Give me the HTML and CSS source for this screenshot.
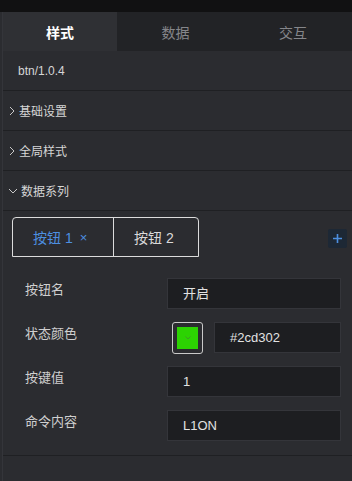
FILE: index.html
```html
<!DOCTYPE html>
<html lang="zh">

<head>
  <meta charset="UTF-8">
  <meta name="viewport" content="width=device-width, initial-scale=1.0">
  <title>属性面板</title>
  <link rel="stylesheet" href="styles.css">
</head>

<body>
  <div class="topbar"></div>
  <div class="panel">
    <div class="tabs">
      <div class="tab active">样式</div>
      <div class="tab">数据</div>
      <div class="tab">交互</div>
    </div>

    <div class="meta">btn/1.0.4</div>

    <div class="section">
      <svg class="arrow" width="8" height="10" viewBox="0 0 8 10"><path d="M2 1l4 4-4 4" fill="none" stroke="#c8c8c8" stroke-width="1"/></svg>
      <span>基础设置</span>
    </div>
    <div class="section">
      <svg class="arrow" width="8" height="10" viewBox="0 0 8 10"><path d="M2 1l4 4-4 4" fill="none" stroke="#c8c8c8" stroke-width="1"/></svg>
      <span>全局样式</span>
    </div>
    <div class="section">
      <svg class="arrow" width="10" height="8" viewBox="0 0 10 8"><path d="M1 2l4 4 4-4" fill="none" stroke="#c8c8c8" stroke-width="1"/></svg>
      <span>数据系列</span>
    </div>

    <div class="series">
      <div class="series-tabs">
        <div class="btn-tabs">
          <div class="btn-tab current">按钮 1 <span class="close">×</span></div>
          <div class="btn-tab second">按钮 2</div>
        </div>
        <div class="add">
          <svg width="11" height="11" viewBox="0 0 11 11"><path d="M5.5 1v9M1 5.5h9" stroke="#4d8fe0" stroke-width="1.6"/></svg>
        </div>
      </div>

      <div class="form">
        <div class="row">
          <div class="label">按钮名</div>
          <div class="input">开启</div>
        </div>
        <div class="row">
          <div class="label">状态颜色</div>
          <div class="color">
            <div class="swatch">
              <div class="fill">
                <svg width="8" height="6" viewBox="0 0 8 6"><path d="M1.5 1.5l2.5 2.5 2.5-2.5" fill="none" stroke="#3f9a25" stroke-width="1"/></svg>
              </div>
            </div>
            <div class="input hex">#2cd302</div>
          </div>
        </div>
        <div class="row">
          <div class="label">按键值</div>
          <div class="input">1</div>
        </div>
        <div class="row">
          <div class="label">命令内容</div>
          <div class="input">L1ON</div>
        </div>
      </div>
    </div>
  </div>
</body>

</html>
```

FILE: styles.css
```css
body {
  margin: 0;
  background-color: #2b2c30;
  font-family: "Liberation Sans", "Noto Sans CJK SC", sans-serif;
  font-size: 13px;
  color: #d0d0d0;
}

.topbar {
  height: 12px;
  background-color: #111112;
}

.panel {
  margin-left: 2px;
  border-left: 1px solid #34353a;
  background-color: #2b2c30;
  min-height: 469px;
}

.tabs {
  display: grid;
  grid-template-columns: 114px 117px 1fr;
  height: 39px;
  background-color: #222326;
}

.tab {
  display: flex;
  align-items: center;
  justify-content: center;
  font-size: 14px;
  color: #85868a;
}

.tab.active {
  background-color: #2f3034;
  color: #fff;
  font-weight: bold;
}

.meta {
  height: 39px;
  line-height: 41px;
  padding-left: 15px;
  font-size: 12px;
  color: #d6d6d6;
  border-bottom: 1px solid #1f2023;
}

.section {
  display: flex;
  align-items: center;
  gap: 3px;
  height: 39px;
  padding-left: 5px;
  font-size: 12px;
  color: #d6d6d6;
  border-bottom: 1px solid #1f2023;
}

.arrow {
  flex: none;
}

.series {
  padding: 6px 5px 0 9px;
  border-bottom: 1px solid #1f2023;
  height: 238px;
}

.series-tabs {
  display: flex;
  align-items: center;
  justify-content: space-between;
}

.btn-tabs {
  display: flex;
  height: 38px;
  border: 1px solid #dcdcdc;
  border-radius: 4px 4px 0 0;
}

.btn-tab {
  display: flex;
  align-items: center;
  padding: 0 20px;
  font-size: 14px;
  color: #dadada;
}

.btn-tab.current {
  width: 60px;
  color: #4d8fe0;
  border-right: 1px solid #dcdcdc;
}

.btn-tab.second {
  width: 44px;
}

.close {
  margin-left: 7px;
  font-size: 13px;
}

.add {
  display: flex;
  align-items: center;
  justify-content: center;
  width: 19px;
  height: 19px;
  margin-top: 3px;
  border-radius: 2px;
  background-color: #1d2835;
}

.form {
  padding: 21px 0 0 13px;
}

.row {
  display: flex;
  align-items: flex-start;
  height: 44px;
}

.label {
  width: 142px;
  line-height: 24px;
  color: #cfcfcf;
}

.input {
  box-sizing: border-box;
  width: 174px;
  height: 31px;
  line-height: 30px;
  padding-left: 15px;
  background-color: #1d1e21;
  border: 1px solid #34353a;
  color: #e2e2e2;
}

.color {
  display: flex;
  gap: 11px;
  padding-left: 5px;
}

.swatch {
  box-sizing: border-box;
  width: 31px;
  height: 32px;
  padding: 4px;
  border: 1px solid #c9c9c9;
  border-radius: 3px;
}

.fill {
  display: flex;
  align-items: center;
  justify-content: center;
  height: 100%;
  background-color: #2cd302;
}

.input.hex {
  width: 127px;
}
```
